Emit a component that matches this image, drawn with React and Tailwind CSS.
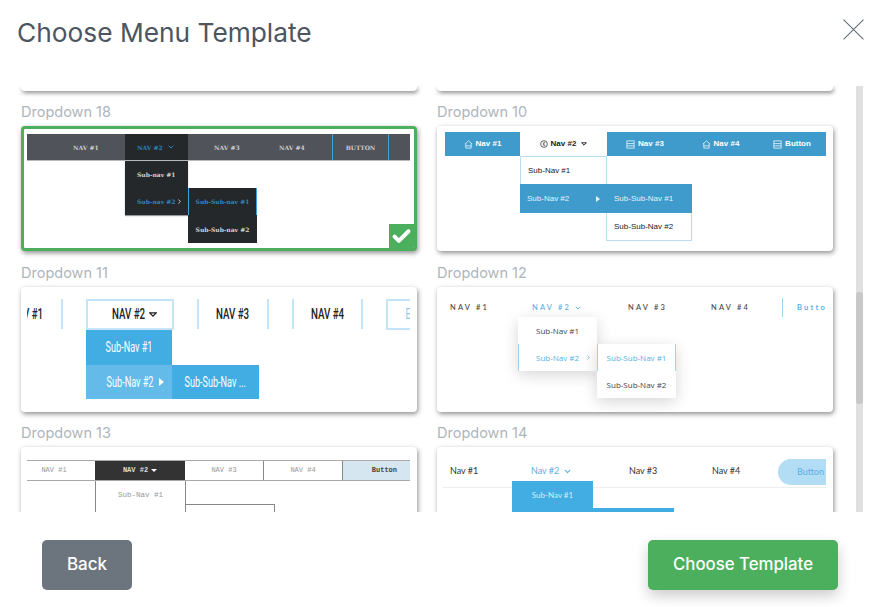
import { Check, ChevronDown, ChevronRight } from 'lucide-react';

const UI = "font-['Inter',sans-serif]";

function Label({ children }) {
  return <div className="h-[35px] pt-[11px] text-[14.5px] leading-[20px] text-[#adb5bd]">{children}</div>;
}

function Card({ children, className = '' }) {
  return (
    <div className={`relative h-[125px] overflow-hidden rounded-[4px] bg-white shadow-[1px_2px_5px_rgba(0,0,0,0.45)] ${className}`}>
      {children}
    </div>
  );
}

function Stub() {
  return <div className="h-[5px] rounded-b-[4px] bg-white shadow-[1px_2px_4px_rgba(0,0,0,0.45)]" />;
}

function Caret({ className = '' }) {
  return (
    <svg viewBox="0 0 10 6" className={`inline-block h-[4px] w-[6px] ${className}`}>
      <path d="M1 1h8L5 5z" fill="none" stroke="currentColor" strokeWidth="1.6" />
    </svg>
  );
}

function HomeIcon() {
  return (
    <svg viewBox="0 0 10 10" className="h-[9px] w-[9px]" fill="none" stroke="currentColor" strokeWidth="0.8">
      <path d="M1 4.5 5 1l4 3.5M2 4v5h6V4M2 6.5h6" />
    </svg>
  );
}

function BoxIcon() {
  return (
    <svg viewBox="0 0 10 10" className="h-[9px] w-[9px]" fill="none" stroke="currentColor" strokeWidth="0.8">
      <rect x="1" y="1" width="8" height="8" />
      <path d="M1 4h8M1 6.5h8" />
    </svg>
  );
}

function ClockIcon() {
  return (
    <svg viewBox="0 0 10 10" className="h-[8px] w-[8px]" fill="none" stroke="currentColor" strokeWidth="0.9">
      <circle cx="5" cy="5" r="4.2" />
      <path d="M6.6 3.4H4.6v3.2h2" />
    </svg>
  );
}

function Serif18() {
  const cls = "font-['DejaVu_Serif',serif] font-bold text-[6px]";
  return (
    <Card className="border-[3px] border-[#4caf5d] rounded-[3px]">
      <div className={`ml-[3px] mt-[5px] flex h-[27px] w-[383px] items-center border-b border-[#b8b8b8] bg-[#505359] text-[#cfcfcf] ${cls}`}>
        <div className="w-[98px] pl-[46px]">NAV #1</div>
        <div className="flex h-full w-[63px] items-center gap-[4px] bg-[#25282a] pl-[12px] text-[#2f86bd]">
          NAV #2 <ChevronDown size={8} strokeWidth={3} />
        </div>
        <div className="w-[73px] pl-[26px]">NAV #3</div>
        <div className="w-[71px] pl-[18px]">NAV #4</div>
        <div className="flex h-full w-[57px] items-center justify-center border-x border-[#3f9fdc]">BUTTON</div>
      </div>
      <div className="absolute left-[101px] top-[32px] w-[63px] bg-[#25282a] text-[#d4d4d4] shadow-[0_1px_1px_rgba(0,0,0,0.4)]">
        <div className={`flex h-[27px] items-center pl-[12px] ${cls}`}>Sub-nav #1</div>
        <div className={`flex h-[27px] items-center gap-[1px] pl-[12px] text-[#2f86bd] ${cls}`}>
          Sub-nav #2 <ChevronRight size={7} strokeWidth={3} className="text-[#d8d8d8]" />
        </div>
      </div>
      <div className="absolute left-[164px] top-[59px] w-[69px] bg-[#25282a] text-[#d4d4d4]">
        <div className={`flex h-[27px] items-center justify-center border-x border-[#3f9fdc] text-[#2f86bd] ${cls}`}>Sub-Sub-nav #1</div>
        <div className={`flex h-[28px] items-center justify-center ${cls}`}>Sub-Sub-nav #2</div>
      </div>
      <div className="absolute bottom-0 right-0 flex h-[24px] w-[25px] items-center justify-center bg-[#4caf5d] text-white">
        <Check size={21} strokeWidth={4.5} />
      </div>
    </Card>
  );
}

function Blue10() {
  const nav = "flex h-full items-center justify-center gap-[3px] text-[8px] font-bold font-['Liberation_Sans',sans-serif]";
  const sub = "flex items-center text-[8px] font-['Liberation_Sans',sans-serif]";
  return (
    <Card>
      <div className="ml-[8px] mt-[6px] flex h-[24px] w-[381px] bg-[#3f9bcb] text-white">
        <div className={`${nav} w-[75px]`}><HomeIcon /> Nav #1</div>
        <div className={`${nav} w-[87px] bg-white text-[#222]`}>
          <ClockIcon /> Nav #2 <Caret className="ml-[2px]" />
        </div>
        <div className={`${nav} w-[76px]`}><BoxIcon /> Nav #3</div>
        <div className={`${nav} w-[75px]`}><HomeIcon /> Nav #4</div>
        <div className={`${nav} w-[68px]`}><BoxIcon /> Button</div>
      </div>
      <div className="absolute left-[83px] top-[30px] w-[87px] text-[#222]">
        <div className={`${sub} h-[28px] border-x border-t border-[#b9def2] pl-[7px]`}>Sub-Nav #1</div>
        <div className={`${sub} h-[29px] justify-between bg-[#3f9bcb] pl-[7px] pr-[7px] text-[#e4f2fa]`}>
          Sub-Nav #2 <span className="h-0 w-0 border-y-[3px] border-l-[4px] border-y-transparent border-l-[#e4f2fa]" />
        </div>
      </div>
      <div className="absolute left-[169px] top-[58px] w-[86px] text-[#222]">
        <div className={`${sub} h-[29px] bg-[#3f9bcb] pl-[8px] text-[#e4f2fa]`}>Sub-Sub-Nav #1</div>
        <div className={`${sub} h-[28px] border-x border-b border-[#b9def2] pl-[7px]`}>Sub-Sub-Nav #2</div>
      </div>
    </Card>
  );
}

function Narrow({ children, className = '' }) {
  return <span className={`inline-block scale-x-[0.65] whitespace-nowrap font-['Roboto',sans-serif] ${className}`}>{children}</span>;
}

function Oswald11() {
  const sep = 'h-[30px] w-[2px] shrink-0 bg-[#c3e5f7]';
  const nav = 'flex shrink-0 justify-center text-[15px] font-medium text-[#222]';
  return (
    <Card>
      <div className="ml-[6px] mt-[12px] flex h-[31px] w-[383px] items-start overflow-hidden">
        <div className="flex h-[30px] w-[34px] shrink-0 items-center justify-end overflow-hidden pr-[18px] text-[15px] font-medium text-[#222]">
          <Narrow className="origin-right shrink-0">NAV #1</Narrow>
        </div>
        <div className={sep} />
        <div className="ml-[23px] flex h-[31px] w-[88px] shrink-0 items-center justify-center border-2 border-[#c3e5f7] text-[15px] font-medium text-[#222]">
          <Narrow className="-mr-[6px]">NAV #2</Narrow> <Caret className="h-[5px] w-[8px]" />
        </div>
        <div className={`${sep} ml-[23px]`} />
        <div className={`${nav} h-[30px] w-[68px] items-center`}><Narrow>NAV #3</Narrow></div>
        <div className={sep} />
        <div className="w-[23px] shrink-0" />
        <div className={sep} />
        <div className={`${nav} h-[30px] w-[67px] items-center`}><Narrow>NAV #4</Narrow></div>
        <div className={sep} />
        <div className="ml-[23px] flex h-[31px] w-[40px] shrink-0 items-center border-2 border-r-0 border-[#c3e5f7] pl-[16px] text-[14px] text-[#8cc9ee]">
          <Narrow>E</Narrow>
        </div>
      </div>
      <div className="absolute left-[65px] top-[43px] w-[86px] text-[14px] text-white">
        <div className="flex h-[35px] items-center justify-center bg-[#42ade2]"><Narrow>Sub-Nav #1</Narrow></div>
        <div className="flex h-[34px] items-center justify-center bg-[#64bbea]">
          <Narrow className="-mr-[9px]">Sub-Nav #2</Narrow>
          <span className="ml-[1px] h-0 w-0 border-y-[4px] border-l-[5px] border-y-transparent border-l-white" />
        </div>
      </div>
      <div className="absolute left-[151px] top-[78px] flex h-[34px] w-[87px] items-center justify-center bg-[#42ade2] text-[14px] text-white">
        <Narrow>Sub-Sub-Nav ...</Narrow>
      </div>
    </Card>
  );
}

function Wide12() {
  const nav = "absolute top-[16px] text-[7.5px] leading-[10px] tracking-[2.2px] font-['Lato',sans-serif]";
  const sub = "flex items-center text-[8px] font-['Open_Sans',sans-serif]";
  return (
    <Card>
      <span className={`${nav} left-[13px] font-medium text-[#444]`}>NAV #1</span>
      <span className={`${nav} left-[95px] flex items-center gap-[3px] font-medium text-[#58b0e5]`}>NAV #2 <ChevronDown size={8} strokeWidth={2.5} /></span>
      <span className={`${nav} left-[191px] font-medium text-[#444]`}>NAV #3</span>
      <span className={`${nav} left-[274px] font-medium text-[#444]`}>NAV #4</span>
      <span className="absolute left-[345px] top-[11px] h-[19px] w-[1px] bg-[#9ed3f0]" />
      <span className={`${nav} left-[360px] font-bold text-[#58b0e5]`}>Butto</span>
      <div className="absolute left-[81px] top-[30px] w-[79px] bg-white text-[#444] shadow-[0_4px_14px_rgba(0,0,0,0.16)]">
        <div className={`${sub} h-[27px] pl-[18px]`}>Sub-Nav #1</div>
        <div className={`${sub} h-[27px] gap-[6px] border-l border-[#9ed3f0] pl-[17px] text-[#58b0e5]`}>
          Sub-Nav #2 <ChevronRight size={7} strokeWidth={2.5} />
        </div>
      </div>
      <div className="absolute left-[160px] top-[57px] w-[79px] bg-white text-[#444] shadow-[0_4px_14px_rgba(0,0,0,0.16)]">
        <div className={`${sub} h-[27px] justify-center border-x border-[#9ed3f0] text-[#58b0e5]`}>Sub-Sub-Nav #1</div>
        <div className={`${sub} h-[27px] justify-center`}>Sub-Sub-Nav #2</div>
      </div>
    </Card>
  );
}

function Mono13() {
  const cell = "flex h-full items-center justify-center text-[7px] font-['Liberation_Mono',monospace]";
  return (
    <Card>
      <div className="ml-[6px] mt-[13px] flex h-[21px] w-[383px] border-y border-[#aaa] text-[#999]">
        <div className={`${cell} w-[68px] pr-[14px]`}>NAV #1</div>
        <div className={`${cell} w-[90px] gap-[3px] bg-[#333] font-bold text-[#ddd]`}>
          NAV #2 <span className="h-0 w-0 border-x-[3px] border-t-[3px] border-x-transparent border-t-white" />
        </div>
        <div className={`${cell} w-[79px] border-r border-[#888]`}>NAV #3</div>
        <div className={`${cell} w-[79px] border-r border-[#888]`}>NAV #4</div>
        <div className={`${cell} w-[67px] justify-end bg-[#d5e6f1] pr-[13px] font-bold text-[#444]`}>Button</div>
      </div>
      <div className="absolute left-[74px] top-[34px] flex h-[91px] w-[91px] justify-center border-x border-[#888] pt-[9px] text-[7.5px] leading-[10px] text-[#999] font-['Liberation_Mono',monospace]">
        Sub-Nav #1
      </div>
      <div className="absolute left-[164px] top-[57px] h-[68px] w-[90px] border-x border-t border-[#888]" />
    </Card>
  );
}

function Quick14() {
  const nav = "absolute top-[18px] text-[9px] leading-[12px] font-['Lato',sans-serif]";
  return (
    <Card>
      <div className="ml-[6px] mt-[12px] flex h-[29px] w-[383px] justify-end overflow-hidden border-b border-[#eee]">
        <div className="h-[26px] w-[48px] shrink-0 rounded-l-[13px] bg-[#b3dcf5] pl-[19px] text-[9px] leading-[26px] text-[#58b0e5] font-['Lato',sans-serif]">Button</div>
      </div>
      <span className={`${nav} left-[13px] text-[#333]`}>Nav #1</span>
      <span className={`${nav} left-[94px] flex items-center gap-[4px] text-[#58b0e5]`}>Nav #2 <ChevronDown size={9} strokeWidth={3} /></span>
      <span className={`${nav} left-[192px] text-[#333]`}>Nav #3</span>
      <span className={`${nav} left-[275px] text-[#333]`}>Nav #4</span>
      <div className="absolute left-[75px] top-[34px] flex h-[91px] w-[81px] justify-center bg-[#42ade2] pt-[8px] text-[8px] leading-[12px] text-[#d6eefb] font-['Lato',sans-serif]">Sub-Nav #1</div>
      <div className="absolute left-[156px] top-[61px] h-[64px] w-[81px] bg-[#42ade2]" />
    </Card>
  );
}

export default function App() {
  return (
    <div className={`flex h-[607px] w-[884px] flex-col overflow-hidden bg-white ${UI}`}>
      <header className="flex h-[86px] shrink-0 items-start justify-between pl-[17px] pr-[20px]">
        <h1 className="mt-[15px] text-[26.3px] leading-[36px] text-[#4c5560]">Choose Menu Template</h1>
        <svg viewBox="0 0 20 20" className="mt-[19px] h-[21px] w-[21px] text-[#5f6b76]" fill="none" stroke="currentColor" strokeWidth="1">
          <path d="M0.5 0.5 19.5 19.5M19.5 0.5 0.5 19.5" />
        </svg>
      </header>

      <div className="flex h-[426px] shrink-0">
        <div className="w-[856px] shrink-0 overflow-hidden pl-[21px]">
          <div className="grid grid-cols-[396px_396px] gap-x-[20px]">
            <Stub />
            <Stub />
            <div><Label>Dropdown 18</Label><Serif18 /></div>
            <div><Label>Dropdown 10</Label><Blue10 /></div>
            <div className="mt-[1px]"><Label>Dropdown 11</Label><Oswald11 /></div>
            <div className="mt-[1px]"><Label>Dropdown 12</Label><Wide12 /></div>
            <div><Label>Dropdown 13</Label><Mono13 /></div>
            <div><Label>Dropdown 14</Label><Quick14 /></div>
          </div>
        </div>
        <div className="h-full w-[7px] shrink-0 bg-[#e0e0e0] pt-[206px]">
          <div className="h-[112px] rounded-[3px] bg-[#c8c8c8]" />
        </div>
      </div>

      <footer className="flex flex-1 items-start justify-between pl-[42px] pr-[46px] pt-[28px]">
        <button className="h-[50px] w-[90px] rounded-[5px] bg-[#6c757d] text-[17px] font-medium text-white">Back</button>
        <button className="h-[50px] w-[190px] rounded-[5px] bg-[#4caf5d] text-[16.8px] font-medium text-white shadow-[0_6px_14px_rgba(0,0,0,0.2)]">Choose Template</button>
      </footer>
    </div>
  );
}
